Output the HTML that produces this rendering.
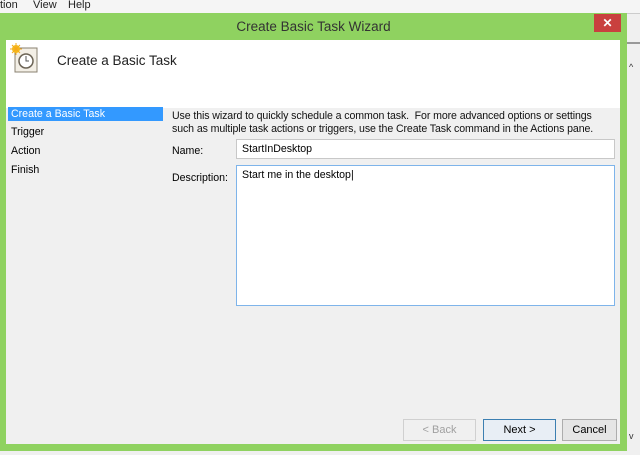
<!DOCTYPE html>
<html><head><meta charset="utf-8"><style>
*{margin:0;padding:0;box-sizing:border-box}
body{width:640px;height:455px;overflow:hidden;background:#f0f0f0;font-family:"Liberation Sans",sans-serif;font-size:10.6px;color:#000;position:relative}
.abs{position:absolute}
.menu{left:0;top:0;width:640px;height:13px;background:#f5f5f5;font-size:11px;line-height:10px;color:#222}
.frame{left:0;top:13px;width:627px;height:438px;background:#8fd260}
.title{left:0;top:13px;width:627px;height:27px;text-align:center;font-size:13.5px;line-height:27px;color:#333}
.close{left:594px;top:14px;width:27px;height:18px;background:#c9403e;color:#fff;text-align:center;font-size:12px;line-height:18px;font-weight:bold}
.inner{left:6px;top:40px;width:614px;height:404px;background:#f0f0f0}
.head{left:6px;top:40px;width:614px;height:68px;background:#fff}
.rside{left:627px;top:13px;width:13px;height:442px;background:#f0f0f0;border-top:1px solid #ccc}
.btn{height:22px;border:1px solid #adadad;background:#e5e5e5;text-align:center;line-height:20px;font-size:11px}
</style></head><body>
<div class="abs menu"><span style="position:absolute;left:0">tion</span><span style="position:absolute;left:33px">View</span><span style="position:absolute;left:68px">Help</span></div>
<div class="abs rside"></div>
<div class="abs" style="left:627px;top:42px;width:13px;height:2px;background:#999"></div>
<div class="abs" style="left:629px;top:62px;font-size:9px;color:#333">^</div>
<div class="abs frame"></div>
<div class="abs title">Create Basic Task Wizard</div>
<div class="abs close">✕</div>
<div class="abs inner"></div>
<div class="abs head"></div>
<svg class="abs" style="left:10px;top:43px" width="30" height="32">
<rect x="5" y="5" width="22" height="24" fill="#f3efe6" stroke="#8a8070"/>
<circle cx="16" cy="18" r="7" fill="#fff" stroke="#6b6355" stroke-width="1.5"/>
<path d="M16 13v5h3" stroke="#555" fill="none"/>
<circle cx="6" cy="6" r="4" fill="#f5c21b"/>
<path d="M6 0v12M0 6h12M2 2l8 8M10 2l-8 8" stroke="#f5a81b" stroke-width="1"/>
</svg>
<div class="abs" style="left:57px;top:53px;font-size:13.5px;color:#222">Create a Basic Task</div>
<div class="abs" style="left:8px;top:107px;width:155px;height:14px;background:#3399ff;color:#fff;padding-left:3px;line-height:14px">Create a Basic Task</div>
<div class="abs" style="left:11px;top:126px">Trigger</div>
<div class="abs" style="left:11px;top:145px">Action</div>
<div class="abs" style="left:11px;top:164px">Finish</div>
<div class="abs" style="left:172px;top:110px;line-height:13px;color:#111;letter-spacing:-0.1px">Use this wizard to quickly schedule a common task.&nbsp; For more advanced options or settings<br>such as multiple task actions or triggers, use the Create Task command in the Actions pane.</div>
<div class="abs" style="left:172px;top:145px">Name:</div>
<div class="abs" style="left:236px;top:139px;width:379px;height:20px;background:#fff;border:1px solid #c8c8c8;padding:3px 5px">StartInDesktop</div>
<div class="abs" style="left:172px;top:172px">Description:</div>
<div class="abs" style="left:236px;top:165px;width:379px;height:141px;background:#fff;border:1px solid #7eb4ea;padding:3px 5px">Start me in the desktop|</div>
<div class="abs btn" style="left:403px;top:419px;width:73px;color:#a0a0a0;border-color:#d0d0d0;background:#f0f0f0">&lt; Back</div>
<div class="abs btn" style="left:483px;top:419px;width:73px;border-color:#3c7fb1;background:#e8eef5">Next &gt;</div>
<div class="abs btn" style="left:562px;top:419px;width:55px">Cancel</div>
<div class="abs" style="left:629px;top:431px;font-size:9px;color:#333">v</div>
</body></html>
